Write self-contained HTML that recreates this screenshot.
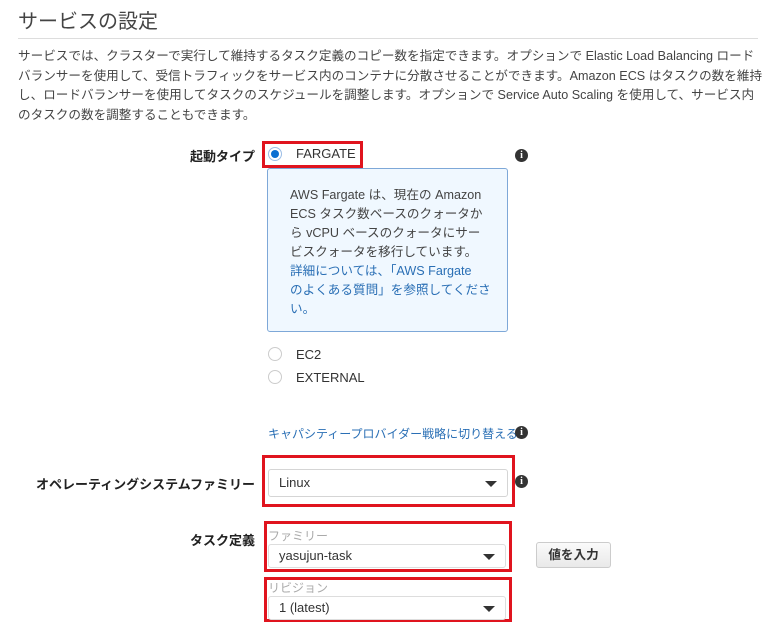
<!DOCTYPE html>
<html><head><meta charset="utf-8"><style>
body{margin:0;width:768px;height:629px;background:#fff;font-family:"Liberation Sans","Noto Sans CJK JP",sans-serif;color:#333;position:relative;overflow:hidden}
.a{position:absolute;white-space:nowrap}
.red{position:absolute;border:3px solid #e0141e;box-sizing:border-box}
.sel{position:absolute;border:1px solid #d5d5d5;border-radius:3px;background:#fff;box-sizing:border-box;font-size:13px;color:#333;padding-left:10px}
.car{position:absolute;right:10px;top:50%;margin-top:-2px;width:0;height:0;border-left:6px solid transparent;border-right:6px solid transparent;border-top:6px solid #333}
.i{position:absolute;width:13px;height:13px;border-radius:50%;background:#333;color:#fff;font:bold 10px/13px "Liberation Serif",serif;text-align:center}
.lbl{position:absolute;font-size:13px;font-weight:bold;color:#222;text-align:right;white-space:nowrap}
.radio{position:absolute;width:14px;height:14px;border:1px solid #ccc;border-radius:50%;box-sizing:border-box}
</style></head><body>
<div class="a" style="left:18px;top:5px;font-size:20px;color:#444">サービスの設定</div>
<div class="a" style="left:18px;top:38px;width:740px;height:1px;background:#ddd"></div>
<div class="a" style="left:18px;top:47px;font-size:12.6px;line-height:19.5px;color:#444;white-space:normal;width:745px">サービスでは、クラスターで実行して維持するタスク定義のコピー数を指定できます。オプションで Elastic Load Balancing ロードバランサーを使用して、受信トラフィックをサービス内のコンテナに分散させることができます。Amazon ECS はタスクの数を維持し、ロードバランサーを使用してタスクのスケジュールを調整します。オプションで Service Auto Scaling を使用して、サービス内のタスクの数を調整することもできます。</div>

<div class="lbl" style="right:513px;top:146px">起動タイプ</div>
<div class="red" style="left:262px;top:141px;width:101px;height:27px"></div>
<div class="radio" style="left:268px;top:147px;border:1px solid #9bbde6;background:#fff"><div style="position:absolute;left:2px;top:2px;width:8px;height:8px;border-radius:50%;background:#0a6ed1"></div></div>
<div class="a" style="left:296px;top:146px;font-size:13px;color:#333">FARGATE</div>
<div class="i" style="left:515px;top:149px">i</div>
<div class="a" style="left:267px;top:168px;width:241px;height:164px;box-sizing:border-box;background:#f0f8ff;border:1px solid #7ea8d8;border-radius:3px"></div>
<div class="a" style="left:290px;top:186px;font-size:12.6px;line-height:19px;color:#444">AWS Fargate は、現在の Amazon<br>ECS タスク数ベースのクォータか<br>ら vCPU ベースのクォータにサー<br>ビスクォータを移行しています。<br><span style="color:#2a6fb5">詳細については、「AWS Fargate<br>のよくある質問」を参照してくださ<br>い。</span></div>

<div class="radio" style="left:268px;top:347px"></div>
<div class="a" style="left:296px;top:347px;font-size:13px">EC2</div>
<div class="radio" style="left:268px;top:370px"></div>
<div class="a" style="left:296px;top:370px;font-size:13px">EXTERNAL</div>

<div class="a" style="left:268px;top:425px;font-size:12px;color:#2a6fb5">キャパシティープロバイダー戦略に切り替える</div>
<div class="i" style="left:515px;top:426px">i</div>

<div class="lbl" style="right:513px;top:474px">オペレーティングシステムファミリー</div>
<div class="red" style="left:262px;top:455px;width:253px;height:52px"></div>
<div class="sel" style="left:268px;top:469px;width:240px;height:28px;line-height:26px">Linux<div class="car"></div></div>
<div class="i" style="left:515px;top:475px">i</div>

<div class="lbl" style="right:513px;top:530px">タスク定義</div>
<div class="red" style="left:264px;top:521px;width:248px;height:51px"></div>
<div class="a" style="left:268px;top:527px;font-size:12px;color:#aaa">ファミリー</div>
<div class="sel" style="left:268px;top:544px;width:238px;height:24px;line-height:22px;border-color:#ddd">yasujun-task<div class="car"></div></div>
<div class="a" style="left:536px;top:542px;width:75px;height:26px;box-sizing:border-box;border:1px solid #ccc;border-radius:3px;background:linear-gradient(#fafafa,#e9e9e9);font-size:12.6px;font-weight:bold;text-align:center;line-height:24px;color:#333">値を入力</div>
<div class="red" style="left:264px;top:577px;width:248px;height:45px"></div>
<div class="a" style="left:268px;top:579px;font-size:12px;color:#aaa">リビジョン</div>
<div class="sel" style="left:268px;top:596px;width:238px;height:24px;line-height:22px;border-color:#ddd">1 (latest)<div class="car"></div></div>
</body></html>
